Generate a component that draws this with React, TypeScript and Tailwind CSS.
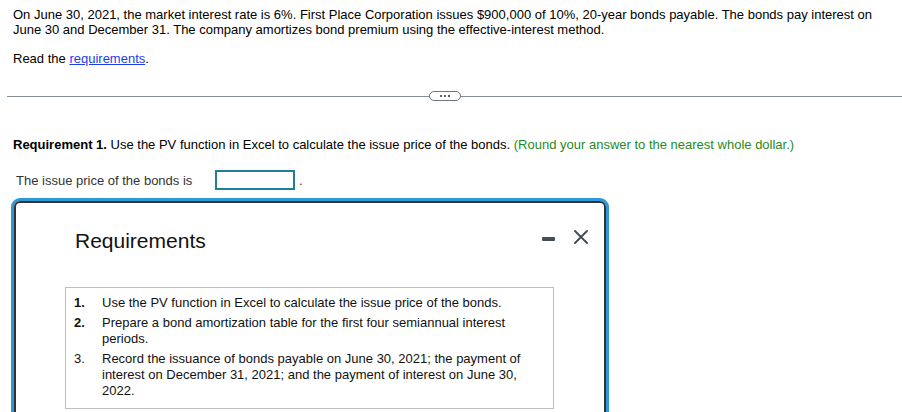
import React from "react";

export default function App() {
  return (
    <div className="w-[902px] h-[412px] overflow-hidden bg-white font-['Liberation_Sans',Arial,sans-serif] text-[13px] leading-[15px] text-black">
      <div className="pl-[13px] pr-4 pt-[7px]">
        <p>
          On June 30, 2021, the market interest rate is 6%. First Place Corporation issues $900,000 of 10%, 20-year bonds payable. The bonds pay interest on June 30 and December 31. The company amortizes bond premium using the effective-interest method.
        </p>
        <p className="mt-[14px]">
          Read the{" "}
          <a href="#" className="text-[#1c3fe6] underline">
            requirements
          </a>
          .
        </p>
      </div>

      <div className="mt-[25px] ml-[7px] flex h-[10px] items-center">
        <div className="h-px w-[422px] bg-[#838d96]" />
        <div className="flex h-[10px] w-[32px] items-center justify-center gap-[2px] rounded-full border border-[#6f7880] bg-white">
          <span className="h-[2px] w-[2px] bg-[#5f6870]" />
          <span className="h-[2px] w-[2px] bg-[#5f6870]" />
          <span className="h-[2px] w-[2px] bg-[#5f6870]" />
        </div>
        <div className="h-px flex-1 bg-[#838d96]" />
      </div>

      <p className="mt-[36px] pl-[13px]">
        <span className="font-bold">Requirement 1.</span> Use the PV function in Excel to calculate the issue price of the bonds.{" "}
        <span className="text-[#1f8a1f]">(Round your answer to the nearest whole dollar.)</span>
      </p>

      <div className="mt-[18px] flex h-[20px] items-center pl-[16px] text-[#333]">
        <span className="w-[199px]">The issue price of the bonds is</span>
        <div className="h-[20px] w-[80px] border-2 border-[#1f7d9e]" />
        <span className="ml-[4px]">.</span>
      </div>

      <div className="ml-[11px] mt-[8px] h-[260px] w-[598px] rounded-[9px] border-[3px] border-[#2e98d9]">
        <div className="h-full w-full rounded-[6px] border-2 border-[#333]">
          <div className="flex justify-between pl-[59px] pr-[16px] pt-[17px]">
            <div className="mt-[9px] text-[21px] leading-[24px] text-[#111]">Requirements</div>
            <div className="flex items-center gap-[19px]">
              <div className="mt-[4px] h-[4px] w-[13px] rounded-[1px] bg-[#44505a]" />
              <svg width="14" height="14" viewBox="0 0 14 14" fill="none" stroke="#3d4954" strokeWidth="1.8" strokeLinecap="round">
                <path d="M1 1L13 13M13 1L1 13" />
              </svg>
            </div>
          </div>

          <div className="ml-[49px] mt-[34px] w-[489px] border border-[#bdbdbd] pb-[9px] pl-[8px] pr-[18px] pt-[7px] leading-[16px] text-[#111]">
            <div className="flex flex-col gap-[4px]">
              <div className="flex">
                <span className="w-[28px] shrink-0 font-bold">1.</span>
                <span>Use the PV function in Excel to calculate the issue price of the bonds.</span>
              </div>
              <div className="flex">
                <span className="w-[28px] shrink-0 font-bold">2.</span>
                <span>Prepare a bond amortization table for the first four semiannual interest periods.</span>
              </div>
              <div className="flex">
                <span className="w-[28px] shrink-0">3.</span>
                <span>Record the issuance of bonds payable on June 30, 2021; the payment of interest on December 31, 2021; and the payment of interest on June 30, 2022.</span>
              </div>
            </div>
          </div>
        </div>
      </div>
    </div>
  );
}
